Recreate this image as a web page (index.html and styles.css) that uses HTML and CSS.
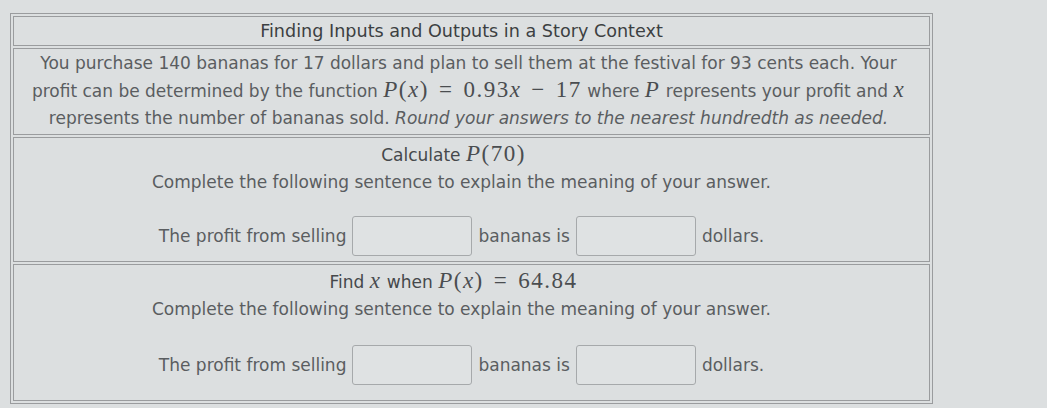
FILE: index.html
```html
<!DOCTYPE html>
<html lang="en">
<head>
    <meta charset="UTF-8">
    <title>Finding Inputs and Outputs in a Story Context</title>
    <link rel="stylesheet" href="styles.css">
</head>
<body>
    <div class="problem">
        <!-- 标题 -->
        <div class="cell title">Finding Inputs and Outputs in a Story Context</div>

        <!-- 题干 -->
        <div class="cell intro">
            You purchase 140 bananas for 17 dollars and plan to sell them at the festival for 93 cents each. Your<br>
            profit can be determined by the function <span class="math"><i>P</i>(<i>x</i>)<span class="op">=</span>0.93<i>x</i><span class="op">&minus;</span>17</span> where <span class="math"><i>P</i></span> represents your profit and <span class="math"><i>x</i></span><br>
            represents the number of bananas sold. <em>Round your answers to the nearest hundredth as needed.</em>
        </div>

        <!-- 第一问 -->
        <div class="cell part part-one">
            <div class="ask">Calculate <span class="math"><i>P</i>(70)</span></div>
            <div class="note">Complete the following sentence to explain the meaning of your answer.</div>
            <div class="sentence">
                <span>The profit from selling</span>
                <input type="text" class="answer">
                <span>bananas is</span>
                <input type="text" class="answer">
                <span>dollars.</span>
            </div>
        </div>

        <!-- 第二问 -->
        <div class="cell part part-two">
            <div class="ask">Find <span class="math"><i>x</i></span> when <span class="math"><i>P</i>(<i>x</i>)<span class="op">=</span>64.84</span></div>
            <div class="note">Complete the following sentence to explain the meaning of your answer.</div>
            <div class="sentence">
                <span>The profit from selling</span>
                <input type="text" class="answer">
                <span>bananas is</span>
                <input type="text" class="answer">
                <span>dollars.</span>
            </div>
        </div>
    </div>
</body>
</html>
```

FILE: styles.css
```css
body, html {
    margin: 0;
    padding: 0;
    background: #dcdfe0;
    font-family: "DejaVu Sans", Verdana, sans-serif;
    color: #5a5d60;
}

body {
    padding: 13px 0 0 10px;
}

.problem {
    width: 923px;
    box-sizing: border-box;
    border: 1px solid #9a9c9e;
    padding: 2px;
    display: flex;
    flex-direction: column;
    gap: 2px;
}

.cell {
    box-sizing: border-box;
    border: 1px solid #9a9c9e;
    text-align: center;
    font-size: 17px;
}

.title {
    height: 30px;
    line-height: 28px;
    font-size: 17.6px;
    color: #3c3f42;
    padding-right: 20px;
}

.intro {
    height: 87px;
    padding: 1px 6px 0 0;
    line-height: 27.5px;
    white-space: nowrap;
}

.math {
    font-family: "Liberation Serif", "DejaVu Serif", serif;
    font-size: 23px;
    letter-spacing: 1.5px;
    line-height: 1;
    color: #4a4d50;
}

.op {
    margin: 0 10px;
}

.part {
    display: flex;
    flex-direction: column;
    align-items: center;
    padding: 4px 20px 0 0;
}

.part-one {
    height: 125px;
}

.part-two {
    height: 137px;
}

.ask {
    height: 26px;
    line-height: 26px;
    color: #45484b;
    margin-right: 16px;
}

.note {
    line-height: 28px;
}

.sentence {
    display: flex;
    align-items: center;
    gap: 6px;
    margin-top: 20px;
}

.part-two .sentence {
    margin-top: 22px;
}

.answer {
    width: 120px;
    height: 40px;
    border: 1px solid #a6a9ab;
    border-radius: 3px;
    background: #dfe2e3;
    margin: 0;
    padding: 0;
    box-sizing: border-box;
}
```
